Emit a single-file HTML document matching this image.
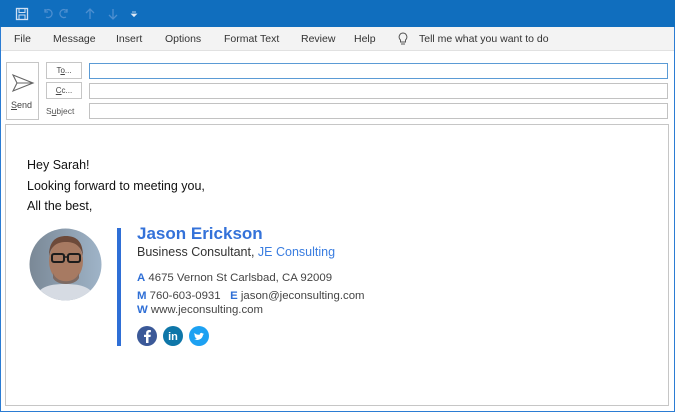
<!DOCTYPE html><html><head><style>
*{margin:0;padding:0;box-sizing:border-box}
body{width:675px;height:412px;background:#fff;font-family:"Liberation Sans",sans-serif;position:relative;overflow:hidden}
.a{position:absolute}
.tb{left:0;top:0;width:675px;height:27px;background:#106ebe}
.rib{left:0;top:27px;width:675px;height:24px;background:#f3f3f3;border-bottom:1px solid #e1e1e1;font-size:10.5px;color:#333}
.rib span{position:absolute;top:6px}
.win{left:0;top:27px;width:675px;height:385px;border:1px solid #2b7cd3;border-top:none}
.btn{border:1px solid #c6c6c6;background:#fff;font-size:8px;color:#444;text-align:center}
.fld{left:89px;width:579px;height:16px;border:1px solid #c2c2c2;background:#fff}
.sig{font-family:"Liberation Sans",sans-serif;white-space:nowrap}
</style></head><body>
<div class="a tb"></div>
<svg class="a" style="left:15px;top:7px" width="140" height="14" viewBox="0 0 140 14">
<rect x="1.5" y="1.5" width="11" height="11" fill="none" stroke="#cfe0f3" stroke-width="1.3"/>
<rect x="4" y="1.5" width="6" height="4" fill="none" stroke="#cfe0f3" stroke-width="1"/>
<rect x="4" y="8" width="6" height="4.5" fill="none" stroke="#cfe0f3" stroke-width="1"/>
<path d="M30 4 a4 4 0 1 1 1 6 M30 2v3h3" fill="none" stroke="#4d8fd0" stroke-width="1.3"/>
<path d="M52 4 a4 4 0 1 0 -1 6 M52 2v3h-3" fill="none" stroke="#4d8fd0" stroke-width="1.3"/>
<path d="M75 12V2 M71 6l4-4 4 4" fill="none" stroke="#4d8fd0" stroke-width="1.3"/>
<path d="M98 2v10 M94 8l4 4 4-4" fill="none" stroke="#4d8fd0" stroke-width="1.3"/>
<path d="M117 5h4 M116.5 7h5l-2.5 2.5z" fill="#dfe9f5" stroke="#dfe9f5" stroke-width="0.8"/>
</svg>
<div class="a rib"><span style="left:14px">File</span><span style="left:53px">Message</span><span style="left:116px">Insert</span><span style="left:165px">Options</span><span style="left:224px">Format Text</span><span style="left:301px">Review</span><span style="left:354px">Help</span>
<svg style="position:absolute;left:398px;top:5px" width="10" height="14" viewBox="0 0 10 14"><path d="M5 1a4 4 0 0 0-2.5 7v2h5V8A4 4 0 0 0 5 1zM3 12h4" fill="none" stroke="#555" stroke-width="1"/></svg>
<span style="left:419px">Tell me what you want to do</span></div>
<div class="a win"></div>
<div class="a btn" style="left:6px;top:62px;width:33px;height:58px">
<svg style="position:absolute;left:4px;top:10px" width="24" height="20" viewBox="0 0 24 20"><path d="M2 2L22 10L2 18L6 10Z M6 10H22" fill="none" stroke="#666" stroke-width="1.1"/></svg>
<span style="position:absolute;left:4px;top:37px;font-size:9px"><u>S</u>end</span></div>
<div class="a btn" style="left:46px;top:62px;width:36px;height:17px;line-height:15px">T<u>o</u>...</div>
<div class="a btn" style="left:46px;top:82px;width:36px;height:17px;line-height:15px"><u>C</u>c...</div>
<div class="a" style="left:46px;top:106px;font-size:8.5px;color:#555">S<u>u</u>bject</div>
<div class="a fld" style="top:63px;border-color:#5b9bd5"></div>
<div class="a fld" style="top:83px"></div>
<div class="a fld" style="top:103px"></div>
<div class="a" style="left:5px;top:124px;width:664px;height:282px;border:1px solid #c6c6c6;background:#fff"></div>
<div class="a" style="left:27px;top:155px;font-size:12.5px;line-height:20.5px;color:#111">Hey Sarah!<br>Looking forward to meeting you,<br>All the best,</div>
<svg class="a" style="left:29px;top:228px" width="73" height="73" viewBox="0 0 73 73">
<defs><clipPath id="c"><circle cx="36.5" cy="36.5" r="36"/></clipPath><linearGradient id="g" x1="0" x2="1"><stop offset="0" stop-color="#7a8896"/><stop offset="1" stop-color="#9fb4c8"/></linearGradient></defs>
<g clip-path="url(#c)"><rect width="73" height="73" fill="url(#g)"/>
<path d="M5 73C8 60 18 56 36 56S64 60 68 73Z" fill="#d6dbe3"/>
<ellipse cx="37" cy="33" rx="17" ry="22" fill="#a77a62"/>
<path d="M20 28C20 12 28 8 37 8S54 12 54 28C52 18 46 14 37 14S22 18 20 28Z" fill="#6d4a3a"/>
<path d="M24 45C28 56 46 56 50 45 L50 50C46 58 28 58 24 50Z" fill="#7d6a63"/>
<rect x="23" y="26" width="12" height="8" rx="2" fill="none" stroke="#1c1c1c" stroke-width="2"/>
<rect x="39" y="26" width="12" height="8" rx="2" fill="none" stroke="#1c1c1c" stroke-width="2"/>
<path d="M35 29h4" stroke="#1c1c1c" stroke-width="1.6"/></g></svg>
<div class="a" style="left:117px;top:228px;width:4px;height:118px;background:#2f6fd6"></div>
<div class="a sig" style="left:137px;top:224px;font-size:17px;font-weight:bold;color:#3472d9">Jason Erickson</div>
<div class="a sig" style="left:137px;top:245px;font-size:12.5px;color:#333">Business Consultant, <span style="color:#3a7de0">JE Consulting</span></div>
<div class="a sig" style="left:137px;top:272px;font-size:11.4px;color:#444"><b style="color:#2f6fd6">A</b> 4675 Vernon St Carlsbad, CA 92009</div>
<div class="a sig" style="left:137px;top:290px;font-size:11.4px;color:#444"><b style="color:#2f6fd6">M</b> 760-603-0931 &nbsp;&nbsp;<b style="color:#2f6fd6">E</b> jason@jeconsulting.com</div>
<div class="a sig" style="left:137px;top:304px;font-size:11.4px;color:#444"><b style="color:#2f6fd6">W</b> www.jeconsulting.com</div>
<svg class="a" style="left:136px;top:325px" width="76" height="22" viewBox="0 0 76 22">
<circle cx="11" cy="11" r="10" fill="#3b5998"/><path d="M12.5 18v-6h2l.3-2.3h-2.3V8.3c0-.7.2-1.1 1.1-1.1h1.3V5.1c-.3 0-1-.1-1.8-.1-1.8 0-3 1.1-3 3.1v1.7H8V12h2v6z" fill="#fff"/>
<circle cx="37" cy="11" r="10" fill="#0e76a8"/><text x="37" y="15" text-anchor="middle" font-size="11" font-weight="bold" fill="#fff" font-family="Liberation Sans">in</text>
<circle cx="63" cy="11" r="10" fill="#1da1f2"/><path d="M58 14c3 2 8 1 9-4l1-1-1 .2.7-1-1 .3c-1-1.2-3-.6-3 1.2C61 10 59.5 9 58.5 8c-.5 1 0 2 .6 2.5H58.5c0 1 1 1.7 1.6 1.8-.3.1-.7.1-1 0 .2.8 1 1.3 1.8 1.3-.8.6-2 .8-3 .4z" fill="#fff"/>
</svg>
</body></html>
